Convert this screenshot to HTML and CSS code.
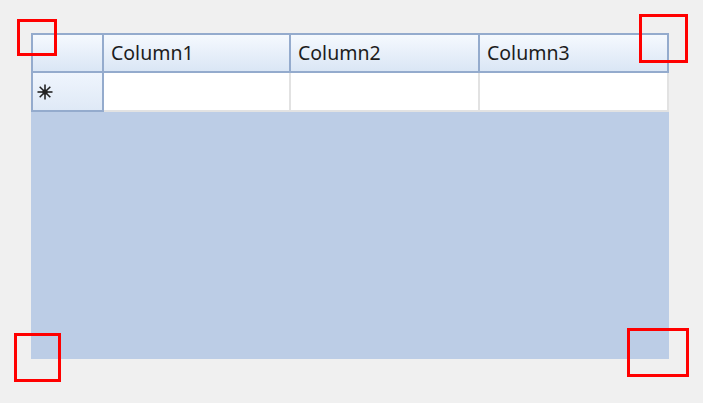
FILE: index.html
```html
<!DOCTYPE html>
<html>
<head>
<meta charset="utf-8">
<link rel="stylesheet" href="styles.css">
</head>
<body>
<div class="page">
  <div class="grid">
    <div class="hcell corner"></div>
    <div class="hcell">Column1</div>
    <div class="hcell">Column2</div>
    <div class="hcell">Column3</div>
    <div class="rowhead">
      <svg class="star" width="16" height="16" viewBox="0 0 16 16">
        <g stroke="#222" stroke-width="1.6" stroke-linecap="butt">
          <line x1="8" y1="0.5" x2="8" y2="15.5"/>
          <line x1="0.5" y1="8" x2="15.5" y2="8"/>
          <line x1="2.7" y1="2.7" x2="13.3" y2="13.3"/>
          <line x1="13.3" y1="2.7" x2="2.7" y2="13.3"/>
        </g>
        <circle cx="8" cy="8" r="2.6" fill="#222"/>
      </svg>
    </div>
    <div class="cell"></div>
    <div class="cell"></div>
    <div class="cell"></div>
  </div>
</div>
<div class="mark m1"></div>
<div class="mark m2"></div>
<div class="mark m3"></div>
<div class="mark m4"></div>
</body>
</html>
```

FILE: styles.css
```css
html, body {
  margin: 0;
  padding: 0;
  background: #f0f0f0;
  width: 703px;
  height: 403px;
  overflow: hidden;
  font-family: "Noto Sans", "Open Sans", sans-serif;
}
.page {
  padding: 33px 0 0 31px;
}
.grid {
  width: 638px;
  height: 326px;
  background: #bccde6;
  display: grid;
  grid-template-columns: 73px 187px 189px 189px;
  grid-template-rows: 40px 39px;
  align-content: start;
}
.hcell {
  box-sizing: border-box;
  border-top: 2px solid #94abcd;
  border-bottom: 2px solid #94abcd;
  border-right: 2px solid #94abcd;
  background: linear-gradient(#f5f9fe, #dae6f5);
  display: flex;
  align-items: center;
  padding-left: 7px;
  font-size: 19.5px;
  color: #1c1c1c;
  padding-bottom: 1px;
}
.hcell.corner {
  border-left: 2px solid #94abcd;
}
.rowhead {
  box-sizing: border-box;
  border-left: 2px solid #94abcd;
  border-right: 2px solid #94abcd;
  border-bottom: 2px solid #94abcd;
  background: linear-gradient(#eff5fd, #dfe9f6);
  display: flex;
  align-items: center;
  padding-left: 4px;
  padding-top: 1px;
}
.star {
  display: block;
}
.cell {
  box-sizing: border-box;
  background: #ffffff;
  border-right: 2px solid #e2e2e2;
  border-bottom: 2px solid #e2e2e2;
}
.mark {
  position: absolute;
  box-sizing: border-box;
  border: 3px solid #ff0000;
}
.m1 { left: 17px; top: 19px; width: 40px; height: 37px; }
.m2 { left: 639px; top: 14px; width: 49px; height: 49px; }
.m3 { left: 14px; top: 333px; width: 47px; height: 49px; }
.m4 { left: 627px; top: 328px; width: 62px; height: 49px; }
```
